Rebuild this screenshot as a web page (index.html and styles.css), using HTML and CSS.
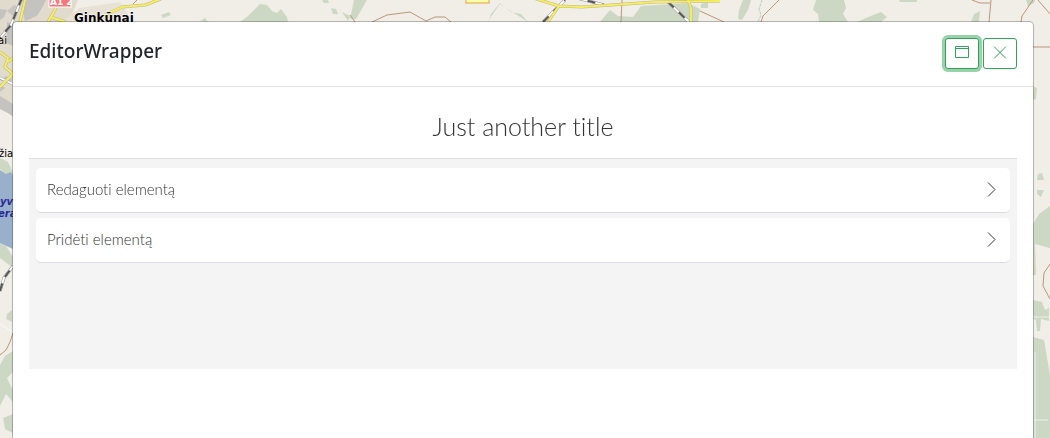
FILE: index.html
```html
<!DOCTYPE html>
<html lang="lt">
<head>
<meta charset="utf-8">
<meta name="viewport" content="width=device-width, initial-scale=1">
<title>EditorWrapper</title>
<link rel="stylesheet" href="styles.css">
</head>
<body>
<svg class="map" viewBox="0 0 1050 438" preserveAspectRatio="xMidYMin slice" aria-hidden="true">
  <rect width="1050" height="438" fill="#f1eee8"/>
  <!-- built-up areas -->
  <g fill="#e0dbcd">
    <path d="M0 0H78L68 24H0Z"/>
    <path d="M0 20H13V118L0 106Z"/>
    <path d="M80 8L120 2 128 14 112 24H58Z" fill="#e8e1d5"/>
  </g>
  <g fill="#c5c3bf">
    <path d="M27 0H46L42 8 37 16 25 21 22 8Z"/>
    <path d="M0 9L7 10 4 17 0 20ZM7 22L13 24V46L7 43Z"/>
    <path d="M0 96L13 104V116L0 109Z"/>
    <path d="M14 5L20 8 13 16 7 11Z" fill="#c8c5bf"/>
    <path d="M0 84L5 88 0 92ZM5 76L12 79 10 84 3 81Z"/>
  </g>
  <!-- woodland -->
  <g fill="#cdd8c4">
    <path d="M354 0H367L356 19H350Z"/>
    <path d="M260 4L267 5 272 11 277 13 281 9 287 17 288 22H240L248 16Z"/>
    <path d="M331 8L336 9 338 14 333 14ZM342 12L350 16 348 21ZM322 0H328L329 3H324Z"/>
    <path d="M200 21L205 18 208 22ZM161 15L169 12 171 15 163 18Z"/>
    <path d="M500 3L501 4 511 12 521 14 528 22H488L491 14ZM500 4L490 18 488 22H528Z"/>
    <path d="M600 22L610 10 618 16 633 17 641 6 688 3 700 9 698 22Z"/>
    <path d="M701 4L708 2V8L701 8ZM743 0H751L748 10 742 20 738 19 739 10Z"/>
    <path d="M816 0H844L846 8 843 14 848 22H819L818 14 813 10Z"/>
    <path d="M857 22L868 17 881 12 887 17 881 22ZM899 0H917V2H900ZM1026 0H1035L1034 3 1028 6ZM971 22L974 14 980 11 979 22Z"/>
    <path d="M1033 86L1037 88 1036 99 1033 100ZM1038 174L1042 173 1044 180H1037ZM1037 190H1044L1041 197 1037 194Z"/>
    <path d="M1033 224L1039 214 1050 206V248L1035 244 1036 275H1033Z"/>
    <path d="M1033 300L1042 302 1045 310 1049 308V321L1041 319 1040 331 1037 331 1036 320 1033 319Z"/>
    <path d="M1033 337L1044 340 1050 375V438H1033Z"/>
    <path d="M0 158L8 162 13 172V180L0 169ZM0 243L6 246 13 257V268L0 258Z"/>
    <path d="M7 314L12 310V322L6 319ZM0 365L5 356 13 351V372L7 378 13 390V402L6 394 0 406ZM3 418L13 414V433L5 429Z"/>
  </g>
  <path d="M0 170L6 174 11 172 13 176V249L0 243Z" fill="#98b0cc"/>
  <path d="M762 0L759 9 761 15 758 22" fill="none" stroke="#b5cac7" stroke-dasharray="3 1"/>
  <!-- minor roads -->
  <g fill="none" stroke="#ba9679" stroke-width="1">
    <path d="M133 4L137 0M350 15L355 22M372 22L387 15 410 12 426 21 435 17 445 17 451 22"/>
    <path d="M622 0L621 22M700 11L724 22M779 0L763 16 761 22M972 0L980 3H990M991 0L989 22M1021 22L1022 16 1033 0M1038 0L1050 14M1033 47H1050"/>
    <path d="M1050 264L1044 273 1043 286 1050 299M0 355L6 350 10 342 13 333"/>
  </g>
  <g fill="none" stroke="#fff" stroke-width="1" opacity=".6">
    <path d="M1033 317H1050M1035 352V438M0 324L13 332M1033 420H1048M7 113L13 118"/>
  </g>
  <!-- railways -->
  <g fill="none">
    <path d="M22 -2L11 25 0 38M543 22L565 0M573 -3L604 5M668 2L689 22M0 78L13 84M0 291L4 278 13 266" stroke="#8d8d8d" stroke-width="3"/>
    <path d="M22 -2L11 25 0 38M543 22L565 0M573 -3L604 5M668 2L689 22M0 78L13 84M0 291L4 278 13 266" stroke="#fff" stroke-width="2"/>
    <path d="M22 -2L11 25 0 38M543 22L565 0M573 -3L604 5M668 2L689 22M0 291L4 278 13 266" stroke="#555" stroke-width="2" stroke-dasharray="8 7"/>
  </g>
  <!-- main roads -->
  <g fill="none" stroke-linejoin="round">
    <path d="M25 0L20 22 13 40M56 8L48 22M50 17L66 22M104 16L122 7 145 5 161 -1M530 -3L559 6 582 7 655 2 720 1M559 6L548 22M688 0L691 8V22M0 52L8 58 5 67 13 74M0 87L13 74M13 58L8 62" stroke="#bdb59c" stroke-width="3"/>
    <path d="M25 0L20 22 13 40M56 8L48 22M50 17L66 22M104 16L122 7 145 5 161 -1M530 -3L559 6 582 7 655 2 720 1M559 6L548 22M688 0L691 8V22M0 52L8 58 5 67 13 74M0 87L13 74M13 58L8 62" stroke="#f7ef58" stroke-width="2"/>
  </g>
  <rect x="49" y="-8" width="22" height="15" fill="#f5797b" stroke="#fff"/>
  <text class="road-label" x="50" y="5">A1 2</text>
  <rect x="466" y="-12" width="23" height="15" fill="#ffffae" stroke="#e4a038"/>
  <text class="town-label" x="74" y="22">Ginkūnai</text>
  <g class="place-label">
    <text x="-2" y="44">ai</text>
    <text x="-1" y="157">žiai</text>
  </g>
  <g class="water-label">
    <text x="0" y="205">yv</text>
    <text x="-2" y="217">era</text>
  </g>
</svg>

<main class="dialog" role="dialog" aria-labelledby="dialog-title">
  <header class="dialog-header">
    <h1 class="dialog-title" id="dialog-title">EditorWrapper</h1>
    <div class="actions">
      <button class="icon-button is-focused" type="button" aria-label="Window">
        <svg width="16" height="16" viewBox="0 0 16 16" fill="none" stroke="currentColor"><path d="M1.500 1.500H14.500V12.500H1.500ZM1.500 3.500H14.500"/></svg>
      </button>
      <button class="icon-button" type="button" aria-label="Close">
        <svg width="16" height="16" viewBox="0 0 16 16" fill="none" stroke="currentColor"><path d="M2 1.500L14 13.500M14 1.500L2 13.500"/></svg>
      </button>
    </div>
  </header>
  <div class="dialog-body">
    <h2 class="panel-title">Just another title</h2>
    <nav class="panel">
      <a class="row" href="#edit"><span>Redaguoti elementą</span>
        <svg width="16" height="16" viewBox="0 0 16 16" fill="none" stroke="currentColor"><path d="M5 1.500L12 8.500 5 15.500"/></svg></a>
      <a class="row" href="#add"><span>Pridėti elementą</span>
        <svg width="16" height="16" viewBox="0 0 16 16" fill="none" stroke="currentColor"><path d="M5 1.500L12 8.500 5 15.500"/></svg></a>
    </nav>
  </div>
</main>
</body>
</html>
```

FILE: styles.css
```css
* {
  box-sizing: border-box;
}

body {
  margin: 0;
  min-height: 100vh;
  display: flex;
  background: #f1eee8;
  font-family: Lato, "Liberation Sans", sans-serif;
  font-variant-ligatures: none;
}

.map {
  position: fixed;
  inset: 0;
  width: 100%;
  height: 100%;
}

.town-label,
.place-label,
.water-label,
.road-label {
  font-family: "DejaVu Sans", sans-serif;
}

.town-label {
  font-size: 12px;
  font-weight: 700;
  stroke: #fff;
  stroke-width: 1px;
  paint-order: stroke;
}

.place-label {
  font-size: 10px;
}

.water-label {
  font-size: 10px;
  font-style: italic;
  font-weight: 700;
  fill: #29299b;
}

.road-label {
  font-size: 9px;
  font-weight: 700;
  fill: #fff;
}

.dialog {
  position: relative;
  flex: 1;
  margin: 21px 16px 0 12px;
  border: 1px solid rgba(0, 0, 0, 0.25);
  border-bottom: 0;
  border-radius: 5px 5px 0 0;
  background: #fff;
  background-clip: padding-box;
}

.dialog-header {
  display: flex;
  align-items: flex-start;
  justify-content: space-between;
  padding: 16px 16px 17px;
  border-bottom: 1px solid #dee2e6;
}

.dialog-title {
  margin: 0;
  color: #212529;
  font: 500 19px/26px "Noto Sans", sans-serif;
}

.actions {
  display: flex;
  gap: 4px;
}

.icon-button {
  display: flex;
  justify-content: center;
  width: 34px;
  height: 31px;
  padding: 6px 0;
  border: 1px solid #31a354;
  border-radius: 3px;
  background: #fff;
  color: #31a354;
}

.icon-button.is-focused {
  box-shadow: 0 0 0 3px #98d1aa;
}

.dialog-body {
  padding: 16px;
}

.panel-title {
  margin: 0;
  padding: 7px 0 16px;
  border-bottom: 1px solid #dcdddf;
  color: #323232;
  font-size: 25px;
  font-weight: 300;
  line-height: 32px;
  text-align: center;
}

.panel {
  display: flex;
  flex-direction: column;
  gap: 5px;
  min-height: 210px;
  padding: 9px 7px;
  background: #f4f4f4;
}

.row {
  display: flex;
  align-items: center;
  justify-content: space-between;
  padding: 11px 11px 13px;
  border-bottom: 1px solid #d8dbdf;
  border-radius: 5px;
  background: #fff;
  color: #323232;
  font-size: 15px;
  font-weight: 300;
  line-height: 20px;
  text-decoration: none;
}
```
